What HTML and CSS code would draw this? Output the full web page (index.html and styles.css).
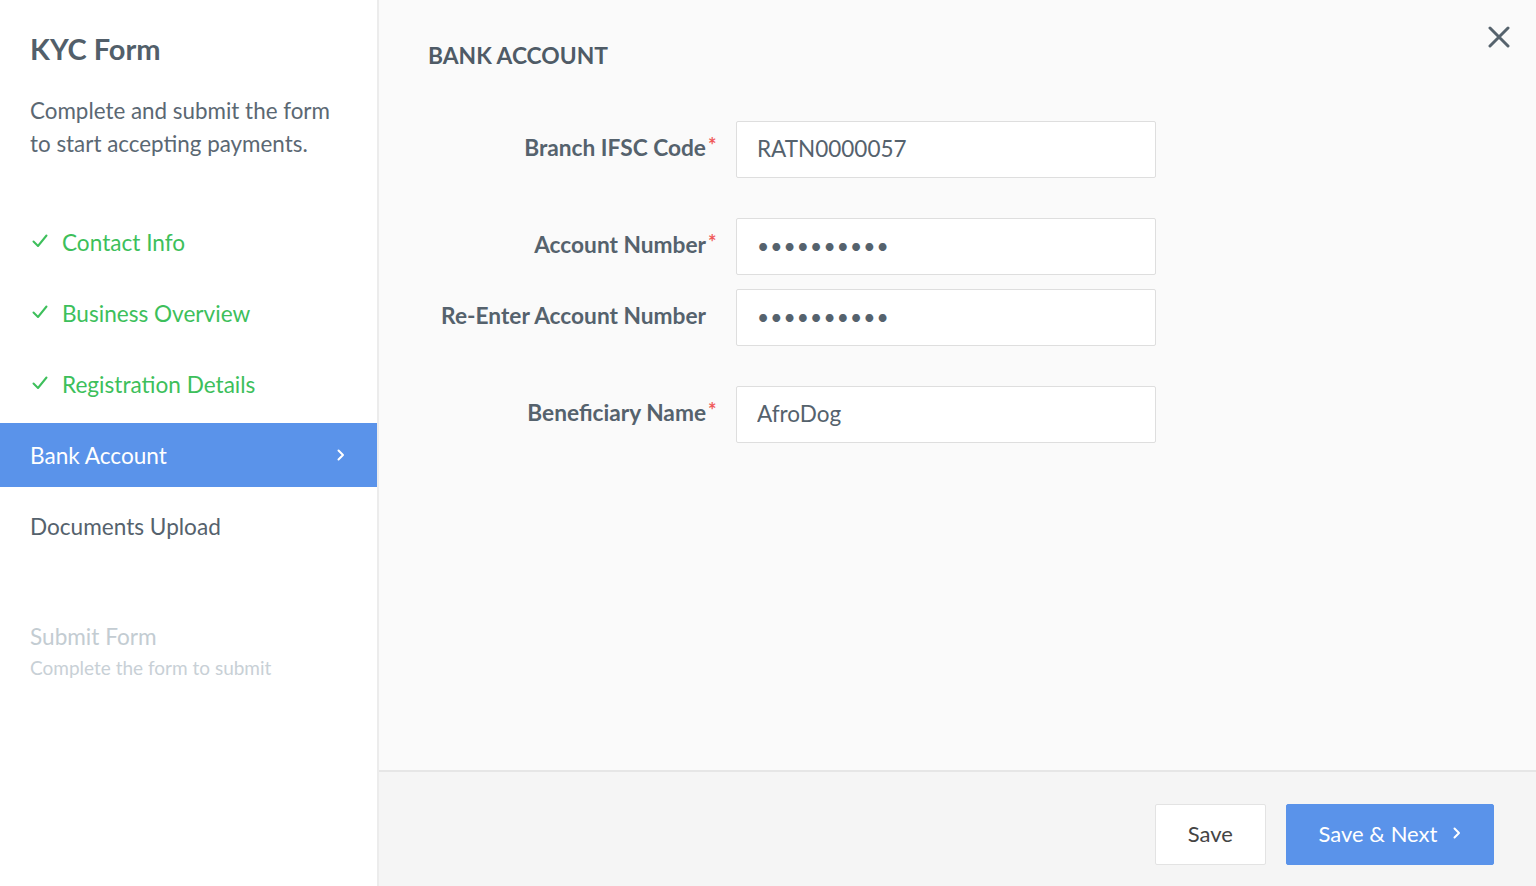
FILE: index.html
```html
<!DOCTYPE html>
<html lang="en">
<head>
    <meta charset="UTF-8">
    <meta name="viewport" content="width=device-width, initial-scale=1.0">
    <title>KYC Form</title>
    <link rel="stylesheet" href="styles.css">
</head>
<body>
    <div class="layout">
        <aside class="sidebar">
            <h1>KYC Form</h1>
            <p class="intro">Complete and submit the form to start accepting payments.</p>
            <ul class="steps">
                <li class="step done">
                    <svg class="check" viewBox="0 0 16 14" width="16" height="14"><path d="M1.5 7.5 L6 12 L14.5 1.5" fill="none" stroke="currentColor" stroke-width="2" stroke-linecap="round" stroke-linejoin="round"/></svg>
                    Contact Info
                </li>
                <li class="step done">
                    <svg class="check" viewBox="0 0 16 14" width="16" height="14"><path d="M1.5 7.5 L6 12 L14.5 1.5" fill="none" stroke="currentColor" stroke-width="2" stroke-linecap="round" stroke-linejoin="round"/></svg>
                    Business Overview
                </li>
                <li class="step done">
                    <svg class="check" viewBox="0 0 16 14" width="16" height="14"><path d="M1.5 7.5 L6 12 L14.5 1.5" fill="none" stroke="currentColor" stroke-width="2" stroke-linecap="round" stroke-linejoin="round"/></svg>
                    Registration Details
                </li>
                <li class="step active">
                    Bank Account
                    <svg class="chevron" viewBox="0 0 8 12" width="8" height="12"><path d="M1.5 1.5 L6 6 L1.5 10.5" fill="none" stroke="currentColor" stroke-width="2" stroke-linecap="round" stroke-linejoin="round"/></svg>
                </li>
                <li class="step">Documents Upload</li>
            </ul>
            <div class="submit-step">
                <div class="submit-title">Submit Form</div>
                <div class="submit-note">Complete the form to submit</div>
            </div>
        </aside>
        <main class="main">
            <button class="close" aria-label="Close">
                <svg viewBox="0 0 22 22" width="22" height="22"><path d="M2 2 L20 20 M20 2 L2 20" fill="none" stroke="currentColor" stroke-width="3" stroke-linecap="round"/></svg>
            </button>
            <div class="content">
                <h2>BANK ACCOUNT</h2>
                <div class="field">
                    <label for="ifsc">Branch IFSC Code<span class="req">*</span></label>
                    <input type="text" id="ifsc" value="RATN0000057">
                </div>
                <div class="field paired">
                    <label for="account">Account Number<span class="req">*</span></label>
                    <input type="password" id="account" value="1234567890">
                </div>
                <div class="field">
                    <label for="account-again">Re-Enter Account Number</label>
                    <input type="password" id="account-again" value="1234567890">
                </div>
                <div class="field">
                    <label for="beneficiary">Beneficiary Name<span class="req">*</span></label>
                    <input type="text" id="beneficiary" value="AfroDog">
                </div>
            </div>
            <footer class="footer">
                <button class="btn">Save</button>
                <button class="btn primary">Save &amp; Next
                    <svg viewBox="0 0 8 12" width="8" height="12"><path d="M1.5 1.5 L6 6 L1.5 10.5" fill="none" stroke="currentColor" stroke-width="2" stroke-linecap="round" stroke-linejoin="round"/></svg>
                </button>
            </footer>
        </main>
    </div>
</body>
</html>
```

FILE: styles.css
```css
html, body {
    margin: 0;
    height: 100%;
}
body {
    font-family: Lato, "Open Sans", sans-serif;
    color: #525f6a;
    background: #fafafa;
}
.layout {
    display: flex;
    height: 886px;
}
.sidebar {
    width: 377px;
    flex-shrink: 0;
    background: #fff;
    border-right: 2px solid #ececec;
    padding-top: 31px;
    box-sizing: content-box;
}
.sidebar h1 {
    margin: 0 0 0 30px;
    font-size: 29px;
    line-height: 36px;
    font-weight: 700;
    color: #525f6a;
}
.intro {
    margin: 27px 30px 0 30px;
    font-size: 22.4px;
    line-height: 33px;
    color: #5b6873;
    width: 315px;
}
.steps {
    list-style: none;
    margin: 50px 0 0 0;
    padding: 0;
}
.step {
    height: 64px;
    margin-bottom: 7px;
    display: flex;
    align-items: center;
    padding: 0 30px;
    font-size: 22.6px;
    color: #55626d;
}
.step.done {
    color: #3dbf5b;
}
.step .check {
    margin: -2px 14px 0 2px;
}
.step.active {
    background: #5a93ea;
    color: #fff;
}
.step .chevron {
    margin-left: auto;
    margin-right: 2px;
}
.submit-step {
    margin: 65px 0 0 30px;
}
.submit-title {
    font-size: 22.6px;
    line-height: 28px;
    color: #c3ccd2;
}
.submit-note {
    margin-top: 5px;
    font-size: 19px;
    line-height: 24px;
    color: #c8d0d6;
}
.main {
    flex: 1;
    position: relative;
    display: flex;
    flex-direction: column;
}
.close {
    position: absolute;
    top: 26px;
    right: 26px;
    border: none;
    background: none;
    padding: 0;
    color: #56636d;
    cursor: pointer;
}
.content {
    flex: 1;
    padding: 40px 0 0 49px;
}
.content h2 {
    margin: 0 0 51px 0;
    font-size: 22.8px;
    line-height: 30px;
    font-weight: 700;
    color: #4f5b66;
}
.field {
    display: flex;
    align-items: center;
    margin-bottom: 40px;
}
.field.paired {
    margin-bottom: 14px;
}
.field label {
    width: 278px;
    text-align: right;
    margin-right: 30px;
    font-size: 22.7px;
    line-height: 28px;
    font-weight: 700;
    color: #55626d;
    position: relative;
    top: -2px;
}
.req {
    position: absolute;
    top: -3px;
    margin-left: 2px;
    font-size: 20px;
    color: #f05a5a;
}
.field input {
    width: 420px;
    height: 57px;
    box-sizing: border-box;
    border: 1px solid #dedede;
    border-radius: 2px;
    background: #fff;
    padding: 0 20px 2px 20px;
    font-family: Lato, "Open Sans", sans-serif;
    font-size: 22.5px;
    color: #55626d;
    outline: none;
}
.field input[type="password"] {
    font-size: 21px;
    letter-spacing: 1.1px;
}
.footer {
    height: 116px;
    box-sizing: border-box;
    border-top: 2px solid #e6e6e6;
    background: #f5f5f5;
    display: flex;
    justify-content: flex-end;
    align-items: flex-start;
    gap: 20px;
    padding: 32px 42px 0 0;
}
.btn {
    height: 61px;
    padding: 0 32px 3px 32px;
    font-family: Lato, "Open Sans", sans-serif;
    font-size: 22px;
    color: #444;
    background: #fff;
    border: 1px solid #e3e3e3;
    border-radius: 2px;
    cursor: pointer;
}
.btn.primary {
    width: 208px;
    padding: 0 0 3px 0;
    background: #5a93ea;
    border-color: #5a93ea;
    color: #fff;
    display: flex;
    align-items: center;
    justify-content: center;
    gap: 16px;
}
```
